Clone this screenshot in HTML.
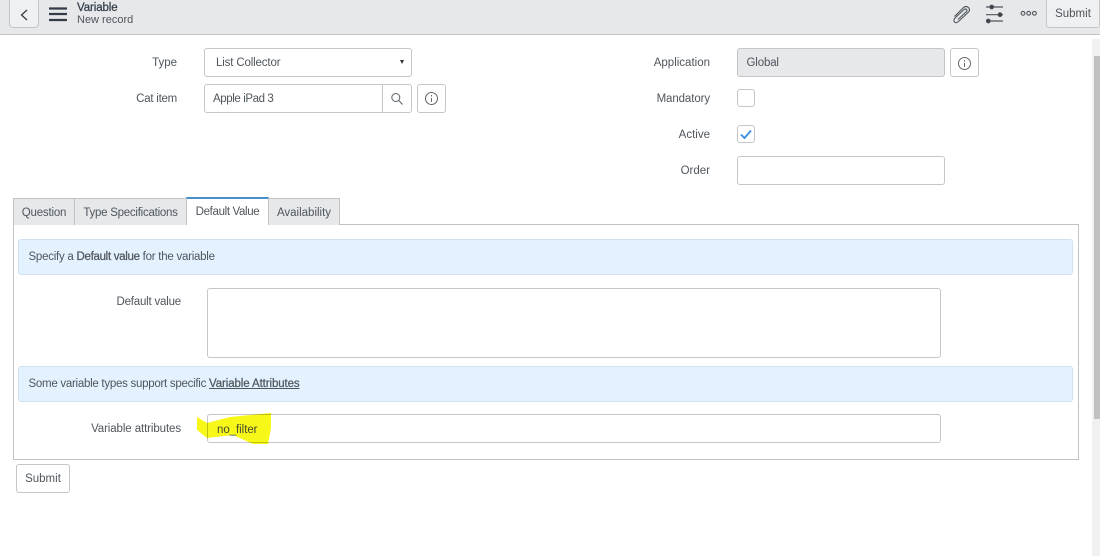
<!DOCTYPE html>
<html><head><meta charset="utf-8"><style>
html,body{margin:0;padding:0;background:#fff;width:1100px;height:556px;overflow:hidden}
body{position:relative;font-family:"Liberation Sans",sans-serif;font-size:11.500px;color:#4f565d}
.a{position:absolute;box-sizing:border-box;white-space:nowrap}
.l{text-align:right;line-height:14px}
.b{background:#fff;border:1px solid #c4c6c9;border-radius:3px}
.t{background:#e6e8ea;border:1px solid #c0c3c6;border-bottom:none;text-align:center;line-height:28px;height:27px;top:198px}
.m{background:#e4f2ff;border:1px solid #cfe1f3;border-radius:3px;line-height:35px;padding-left:9.500px;left:18px;width:1055px;height:36px}
.s{-webkit-text-stroke:.25px #4f565d}
</style></head><body>
<div class="a" style="left:0;top:0;width:1100px;height:35px;background:#e6e8ea;border-bottom:1px solid #c0c3c6"></div>
<div class="a b" style="left:9px;top:-3px;width:30px;height:31px;background:#eff0f1;border-radius:4px"></div>
<svg class="a" style="left:0;top:0" width="140" height="36"><path d="M27 10 L21.500 15 L27 20" fill="none" stroke="#343d47" stroke-width="1.300"/><path d="M49 8.500h18M49 14h18M49 20h18" stroke="#343d47" stroke-width="2.300"/></svg>
<div class="a s" style="left:77px;top:2px;line-height:13px;font-size:11.500px;color:#343d47;letter-spacing:-.1px;-webkit-text-stroke-color:#343d47">Variable</div>
<div class="a" style="left:77px;top:14px;line-height:13px;font-size:11px">New record</div>
<svg class="a" style="left:950px;top:3px" width="90" height="24" fill="none" stroke="#4f565d">
<path d="M4.500 13.500 L13.500 4.500 Q16 2.500 18.500 4.500 Q20.500 7 18.500 9 L8.500 18.500 Q6 20.500 4.500 19 Q3 17.500 5 15 L14 6.500 Q15.500 5.500 16.500 6.500 Q17.500 7.500 16.500 8.500 L8 16.500" stroke-width="1.100"/>
<path d="M36 4h17M36 11.700h17M36 18h17" stroke-width="1.200"/>
<circle cx="41.700" cy="4" r="1.900" fill="#3a4148"/><circle cx="50" cy="11.700" r="1.900" fill="#3a4148"/><circle cx="38.300" cy="18" r="1.900" fill="#3a4148"/>
<circle cx="73" cy="10.300" r="1.900" stroke-width="1.100"/><circle cx="78.700" cy="10.300" r="1.900" stroke-width="1.100"/><circle cx="84.400" cy="10.300" r="1.900" stroke-width="1.100"/>
</svg>
<div class="a b" style="left:1046px;top:-3px;width:54px;height:31px;background:#eff0f1;text-align:center;line-height:33px">Submit</div>

<div class="a l" style="left:100px;width:77px;top:56px">Type</div>
<div class="a b" style="left:204px;top:48px;width:208px;height:29px;padding-left:11px;line-height:29px;letter-spacing:-.15px">List Collector</div>
<div class="a" style="left:400px;top:60px;border:2.500px solid transparent;border-top:4px solid #333;border-bottom:none"></div>
<div class="a l" style="left:100px;width:77px;top:92px;letter-spacing:-.25px">Cat item</div>
<div class="a b" style="left:204px;top:84px;width:179px;height:29px;padding-left:8px;line-height:29px;border-radius:3px 0 0 3px;letter-spacing:-.4px">Apple iPad 3</div>
<div class="a b" style="left:382px;top:84px;width:30px;height:29px;border-radius:0 3px 3px 0"></div>
<svg class="a" style="left:389px;top:91px" width="16" height="16" fill="none" stroke="#5a6167" stroke-width="1"><circle cx="6.800" cy="6.500" r="4"/><path d="M9.800 9.500L13.500 13.500"/></svg>
<div class="a b" style="left:417px;top:84px;width:29px;height:29px"></div>
<svg class="a" style="left:424px;top:91px" width="15" height="15" fill="none" stroke="#666"><circle cx="7.500" cy="7.500" r="6"/><path d="M7.500 7v4M7.500 4v1.500"/></svg>

<div class="a l" style="left:620px;width:90px;top:56px">Application</div>
<div class="a b" style="left:737px;top:48px;width:208px;height:29px;background:#e6e8ea;padding-left:8.500px;line-height:29px;letter-spacing:-.15px">Global</div>
<div class="a b" style="left:950px;top:48px;width:29px;height:29px"></div>
<svg class="a" style="left:957px;top:56px" width="15" height="15" fill="none" stroke="#666"><circle cx="7.500" cy="7.500" r="6"/><path d="M7.500 7v4M7.500 4v1.500"/></svg>
<div class="a l" style="left:620px;width:90px;top:92px;letter-spacing:-.1px">Mandatory</div>
<div class="a b" style="left:737px;top:89px;width:18px;height:18px"></div>
<div class="a l" style="left:620px;width:90px;top:128px">Active</div>
<div class="a b" style="left:737px;top:125px;width:18px;height:18px"></div>
<svg class="a" style="left:737px;top:125px" width="18" height="18" fill="none" stroke="#3a8ee0" stroke-width="1.800"><path d="M4 9.500L7.500 13L14 5.500"/></svg>
<div class="a l" style="left:620px;width:90px;top:164px">Order</div>
<div class="a b" style="left:737px;top:156px;width:208px;height:29px"></div>

<div class="a" style="left:13px;top:224px;width:1066px;height:236px;border:1px solid #c0c3c6"></div>
<div class="a t" style="left:13px;width:62px;letter-spacing:-.2px">Question</div>
<div class="a t" style="left:74px;width:113px;letter-spacing:-.25px">Type Specifications</div>
<div class="a t" style="left:186px;width:83px;background:#fff;border-top:2px solid #4a90c8;height:28px;line-height:27px;top:197px;letter-spacing:-.35px">Default Value</div>
<div class="a t" style="left:268px;width:72px">Availability</div>

<div class="a m" style="top:239px;letter-spacing:-.25px">Specify a <span class="s" style="letter-spacing:-.3px">Default value</span> for the variable</div>
<div class="a l" style="left:60px;width:121px;top:295px;letter-spacing:-.2px">Default value</div>
<div class="a b" style="left:207px;top:288px;width:734px;height:70px"></div>
<div class="a m" style="top:366px;letter-spacing:-.27px">Some variable types support specific <span class="s" style="text-decoration:underline;letter-spacing:-.1px">Variable Attributes</span></div>
<div class="a l" style="left:60px;width:121px;top:422px;letter-spacing:-.1px">Variable attributes</div>
<div class="a b" style="left:207px;top:414px;width:734px;height:29px"></div>
<svg class="a" style="left:190px;top:405px;mix-blend-mode:multiply" width="90" height="50"><path d="M7 12 L17 18 L40 12 L60 10 L81 8 L81 23 L78 39 L63 39 L43 30 L17 33 L7 25 Z" fill="#f8f818"/></svg>
<div class="a" style="left:217px;top:423px;line-height:14px;color:#444c33;letter-spacing:-.05px">no_filter</div>
<div class="a b" style="left:16px;top:464px;width:54px;height:29px;text-align:center;line-height:29px">Submit</div>

<div class="a" style="left:1092px;top:39px;width:8px;height:517px;background:#f1f1f1"></div>
<div class="a" style="left:1094px;top:56px;width:6px;height:363px;background:#c1c1c1"></div>
</body></html>
